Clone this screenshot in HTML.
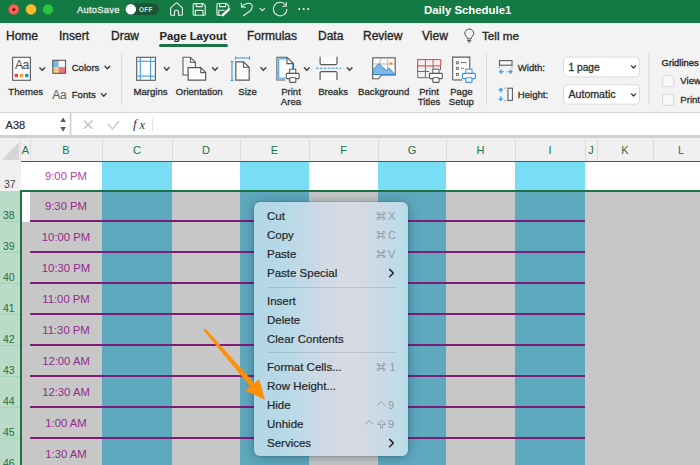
<!DOCTYPE html>
<html><head><meta charset="utf-8">
<style>
*{margin:0;padding:0;box-sizing:border-box}
html,body{width:700px;height:465px;overflow:hidden;background:#f3f3f3;font-family:"Liberation Sans",sans-serif;}
.a{position:absolute}
#title{left:0;top:0;width:700px;height:23px;background:#137a43}
.tl{position:absolute;top:4px;width:11px;height:11px;border-radius:50%}
#tabs{left:0;top:23px;width:700px;height:25px;background:#f3f3f3}
.tab{position:absolute;top:28.6px;font-size:12px;color:#262626;line-height:14px;-webkit-text-stroke:0.35px #262626}
.rl text{stroke:#2e2e2e;stroke-width:0.3px}
#ribbon{left:0;top:48px;width:700px;height:65px;background:#f3f3f3}
.lbl{position:absolute;font-size:10px;color:#262626;line-height:11px;text-align:center}
.sep{position:absolute;width:1px;background:#d8d8d8}
.chev{position:absolute;width:5px;height:5px;border-right:1.3px solid #444;border-bottom:1.3px solid #444;transform:rotate(45deg)}
#fbar{left:0;top:113px;width:700px;height:22px;background:#fff}
#colhdr{left:0;top:138px;width:700px;height:24px;background:#f0f0f0}
.ch{position:absolute;top:144px;font-size:11px;color:#217346;text-align:center;line-height:13px}
.cell{position:absolute}
.rh{position:absolute;left:0;width:20px;font-size:10.5px;text-align:left;padding-left:3px}
.tm{position:absolute;left:30px;width:72px;text-align:center;font-size:11.3px;line-height:13px}
.pl{position:absolute;left:30px;width:555px;height:1.9px;background:linear-gradient(to right,#7e1c78 0,#7e1c78 224px,transparent 224px,transparent 378px,#7e1c78 378px)}
#menu{left:254px;top:202px;width:154px;height:254px;border-radius:6px;overflow:hidden;
  background:linear-gradient(to right,rgb(178,215,230) 0px,rgb(183,217,232) 30px,rgb(198,217,230) 55px,rgb(212,218,228) 80px,rgb(215,218,227) 102px,rgb(204,218,229) 124px,rgb(190,219,232) 145px,rgb(186,218,232) 154px);
  box-shadow:0 0 0 0.5px rgba(0,40,60,0.2),0 1px 12px rgba(0,30,50,0.36)}
.mi{position:absolute;left:13px;font-size:11.5px;color:#262626;line-height:13px;-webkit-text-stroke:0.2px #262626}
.sc{position:absolute;font-size:11.5px;color:#8a9aa2;line-height:13px}
.msep{position:absolute;left:13px;width:129px;height:1px;background:rgba(0,0,0,0.11)}
</style></head><body>
<!-- Title bar -->
<div class="a" id="title"></div>
<svg class="a" style="left:0;top:0" width="320" height="23">
<circle cx="13.8" cy="9.4" r="5.2" fill="#fe5f57" stroke="#c94a43" stroke-width="0.4"/><circle cx="13.8" cy="9.4" r="1.5" fill="#7e0a0a"/>
<circle cx="31" cy="9.4" r="5.2" fill="#febc2e" stroke="#c99526" stroke-width="0.4"/>
<circle cx="48" cy="9.4" r="5.2" fill="#28c840" stroke="#1f9a33" stroke-width="0.4"/>
<rect x="125" y="3.2" width="34" height="11.8" rx="5.9" fill="#1d4f33" opacity="0.85"/>
<circle cx="130.8" cy="9.2" r="5.2" fill="#fff"/>
<g fill="none" stroke="#e9f1ec" stroke-width="1.1" stroke-linejoin="round" stroke-linecap="round">
<path d="M170.6 8.4 Q170.6 7.8 171.1 7.3 L176.5 2.7 L181.9 7.3 Q182.4 7.8 182.4 8.4 V14.6 Q182.4 15.2 181.8 15.2 H178.5 V11.4 Q178.5 10.2 177.3 10.2 H175.7 Q174.5 10.2 174.5 11.4 V15.2 H171.2 Q170.6 15.2 170.6 14.6 Z"/>
<path d="M194.2 3.6 H203.2 L205.2 5.6 V14.2 Q205.2 15.2 204.2 15.2 H194.2 Q193.2 15.2 193.2 14.2 V4.6 Q193.2 3.6 194.2 3.6 Z"/>
<path d="M196.2 3.6 V6.6 H202.2 V3.6"/>
<path d="M195.4 15.2 V10.4 H203 V15.2"/>
<path d="M221.5 15.3 H218 Q216.9 15.3 216.9 14.2 V4.6 Q216.9 3.5 218 3.5 H226.5 L228.7 5.7 V8.4"/>
<path d="M219.6 3.5 V6.6 H225.6 V3.5"/>
<path d="M218.8 15.3 V10.2 H224.2"/>
<path d="M241.6 6.9 Q244.8 3.2 248.8 3.2 Q252.4 3.4 252.2 7.2 Q252 9.4 249.6 11.2 L243.4 15.7"/>
<path d="M241.3 3.3 L241.6 6.9 L245.4 7.2"/>
<path d="M260 8.3 L262.3 10.6 L264.6 8.3"/>
<path d="M286.9 9.2 A6.8 6.8 0 1 1 285.4 4.8"/>
<path d="M286.4 2.6 L286.2 6.1 L282.6 6.3"/>
</g>
<path d="M222.8 15.2 L228.9 9.4" stroke="#fff" stroke-width="2.4" stroke-linecap="round"/>
<circle cx="299.2" cy="9.1" r="1" fill="#fff"/><circle cx="303.7" cy="9.1" r="1" fill="#fff"/><circle cx="308.2" cy="9.1" r="1" fill="#fff"/>
</svg>
<div class="a" style="left:77px;top:4px;font-size:9.4px;letter-spacing:0.25px;color:#e8f0ea;line-height:11px;-webkit-text-stroke:0.3px #e8f0ea">AutoSave</div>
<div class="a" style="left:139px;top:5.5px;font-size:6.4px;font-weight:bold;letter-spacing:0.3px;color:#d5e2d9;line-height:8px">OFF</div>
<div class="a" style="left:424px;top:3px;font-size:11.4px;font-weight:bold;color:#fff;line-height:14px">Daily Schedule1</div>

<!-- Tabs -->
<div class="a" id="tabs"></div>
<div class="tab" style="left:6px">Home</div>
<div class="tab" style="left:59px">Insert</div>
<div class="tab" style="left:111px">Draw</div>
<div class="tab" style="left:159.5px;font-weight:bold;font-size:11.3px;-webkit-text-stroke:0.1px #262626">Page Layout</div>
<div class="a" style="left:159px;top:44px;width:69px;height:3px;border-radius:2px;background:#1e7145"></div>
<div class="tab" style="left:247px">Formulas</div>
<div class="tab" style="left:318px">Data</div>
<div class="tab" style="left:363px">Review</div>
<div class="tab" style="left:422px">View</div>
<div class="tab" style="left:482px;font-size:11.7px">Tell me</div>
<svg class="a" style="left:460px;top:26px" width="20" height="20"><path d="M7.4 12.8 Q7.4 11.4 6.2 10.3 Q4.8 8.9 4.8 7.5 A4.45 4.45 0 0 1 13.7 7.5 Q13.7 8.9 12.3 10.3 Q11.1 11.4 11.1 12.8 Z" fill="none" stroke="#4a4a4a" stroke-width="1"/><path d="M7.5 14.4 H10.9 M8.2 15.9 H10.2" stroke="#4a4a4a" stroke-width="1" stroke-linecap="round"/></svg>

<!-- Ribbon -->
<div class="a" id="ribbon"></div>
<svg class="a" style="left:0;top:0" width="700" height="113">
<rect x="12.6" y="57.3" width="17.8" height="23" fill="#fbfbfb" stroke="#5a5a5a" stroke-width="1.1"/>
<text x="15" y="69.2" font-size="12.2" fill="#4a4a4a" font-family="Liberation Sans" letter-spacing="-0.6">Aa</text>
<rect x="14.6" y="73.9" width="3.4" height="3.3" fill="#e5453f"/><rect x="19.9" y="73.9" width="3.3" height="3.3" fill="#f0a033"/><rect x="25" y="73.9" width="3.5" height="3.3" fill="#2f8fd8"/>
<path d="M39.8 67.8 L42.199999999999996 70.39999999999999 L44.599999999999994 67.8" fill="none" stroke="#3c3c3c" stroke-width="1.4" stroke-linecap="round" stroke-linejoin="round"/>
<rect x="52.8" y="60.3" width="6" height="6.7" fill="#7cb6e6"/><rect x="58.8" y="60.3" width="6.7" height="6.7" fill="#fff"/><rect x="52.8" y="67" width="6" height="6.3" fill="#f3cb82"/><rect x="58.8" y="67" width="6.7" height="6.3" fill="#f07474"/>
<rect x="52.8" y="60.3" width="12.7" height="13" fill="none" stroke="#5a5a5a" stroke-width="1.1"/>
<path d="M105 66.2 L107.4 68.8 L109.8 66.2" fill="none" stroke="#3c3c3c" stroke-width="1.4" stroke-linecap="round" stroke-linejoin="round"/>
<text x="52.3" y="98.7" font-size="12" fill="#5c5c5c" font-family="Liberation Sans" letter-spacing="-0.3">Aa</text>
<path d="M101.3 93.6 L103.7 96.19999999999999 L106.1 93.6" fill="none" stroke="#3c3c3c" stroke-width="1.4" stroke-linecap="round" stroke-linejoin="round"/>
<rect x="121.2" y="53" width="1" height="52" fill="#d9d9d9"/>
<rect x="136.7" y="57.3" width="18.7" height="23" fill="#fbfbfb" stroke="#5a5a5a" stroke-width="1.1"/>
<path d="M140.3 57.8 V80 M150.6 57.8 V80 M137.2 61.3 H155 M137.2 76.1 H155" stroke="#3a96dd" stroke-width="1"/>
<path d="M164.3 67.6 L166.70000000000002 70.19999999999999 L169.10000000000002 67.6" fill="none" stroke="#3c3c3c" stroke-width="1.4" stroke-linecap="round" stroke-linejoin="round"/>
<path d="M183 57.3 H190.4 L195.4 62.3 V67.1 M188 75 H183 V57.3" fill="#fbfbfb" stroke="#5a5a5a" stroke-width="1.1"/>
<path d="M190.4 57.3 V62.3 H195.4" fill="none" stroke="#5a5a5a" stroke-width="1.1"/>
<path d="M188.1 67.6 H200.7 L205.7 72.6 V80.1 H188.1 Z" fill="#fbfbfb" stroke="#5a5a5a" stroke-width="1.2"/>
<path d="M200.7 67.6 V72.6 H205.7" fill="none" stroke="#5a5a5a" stroke-width="1.1"/>
<path d="M212.6 67.8 L215.0 70.39999999999999 L217.4 67.8" fill="none" stroke="#3c3c3c" stroke-width="1.4" stroke-linecap="round" stroke-linejoin="round"/>
<path d="M235.8 61.8 H243.5 L249.2 67.3 V80.1 H235.8 Z" fill="#fbfbfb" stroke="#5a5a5a" stroke-width="1.2"/>
<path d="M243.5 61.8 V67.3 H249.2" fill="none" stroke="#5a5a5a" stroke-width="1.1"/>
<path d="M235.5 58 H249.5 M235.5 56.6 V59.4 M249.5 56.6 V59.4 M232 61.5 V80.4 M230.6 61.5 H233.4 M230.6 80.4 H233.4" stroke="#3a96dd" stroke-width="1.1"/>
<path d="M261 67.8 L263.4 70.39999999999999 L265.8 67.8" fill="none" stroke="#3c3c3c" stroke-width="1.4" stroke-linecap="round" stroke-linejoin="round"/>
<path d="M285.3 80 H276.9 V57.3 H287 L293.5 63.6 V69" fill="#fbfbfb" stroke="#5a5a5a" stroke-width="1.1"/>
<path d="M287 57.3 V63.6 H293.5" fill="none" stroke="#5a5a5a" stroke-width="1.1"/>
<path d="M285.5 78.2 H278.7 V58.8 H286.5 M292.6 64 V69.2" fill="none" stroke="#3a96dd" stroke-width="1"/>
<rect x="289.6" y="69.2" width="6.2" height="4.2" fill="#fff" stroke="#5a5a5a" stroke-width="1"/><rect x="286.3" y="73.4" width="12.8" height="5.2" rx="0.8" fill="#fff" stroke="#5a5a5a" stroke-width="1.1"/><rect x="289.6" y="77.8" width="6.2" height="4.6" rx="0.6" fill="#fff" stroke="#5a5a5a" stroke-width="1.1"/>
<path d="M304.4 67.8 L306.79999999999995 70.39999999999999 L309.2 67.8" fill="none" stroke="#3c3c3c" stroke-width="1.4" stroke-linecap="round" stroke-linejoin="round"/>
<path d="M320.1 56.8 V63.2 Q320.1 64.7 321.6 64.7 H335.5 Q337 64.7 337 63.2 V56.8" fill="#fbfbfb" stroke="#5a5a5a" stroke-width="1.2"/>
<path d="M320.1 80 V73.1 Q320.1 71.6 321.6 71.6 H335.5 Q337 71.6 337 73.1 V80" fill="#fbfbfb" stroke="#5a5a5a" stroke-width="1.2"/>
<path d="M316 68.3 H341.2" stroke="#3a96dd" stroke-width="1.1" stroke-dasharray="2.6 1.3"/>
<path d="M347.2 67.8 L349.59999999999997 70.39999999999999 L352.0 67.8" fill="none" stroke="#3c3c3c" stroke-width="1.4" stroke-linecap="round" stroke-linejoin="round"/>
<rect x="372.7" y="57.8" width="22.5" height="17.2" fill="#fbfbfb" stroke="#5a5a5a" stroke-width="1.1"/>
<path d="M380.1 58.3 V74.5 M387.7 58.3 V74.5 M373.2 64 H394.7" stroke="#b5b5b5" stroke-width="1"/>
<path d="M373.2 69.4 L378.8 63.6 L386.4 70.6 L389 68 L394.9 74.5 H373.2 Z" fill="#7db8e6" stroke="#2f86d0" stroke-width="0.9" stroke-linejoin="round"/>
<circle cx="390.8" cy="63.4" r="1.4" fill="#f39a2b"/>
<path d="M372.7 75 V78.8 H378.6 L381.6 75" fill="#fbfbfb" stroke="#5a5a5a" stroke-width="1.1"/>
<path d="M417.7 77.7 V65.9 M417.7 71.5 H429 M425.4 65.9 V77.7 M417.7 77.7 H428.5 M433.1 65.9 V69 M440.5 65.9 V70" fill="none" stroke="#6a6a6a" stroke-width="1"/>
<rect x="417.7" y="59.6" width="23" height="6.3" fill="none" stroke="#e8474a" stroke-width="1.1"/><path d="M425.4 59.6 V65.9 M433.1 59.6 V65.9" stroke="#e8474a" stroke-width="1"/>
<rect x="432.8" y="69.2" width="6.2" height="4.2" fill="#fff" stroke="#5a5a5a" stroke-width="1"/><rect x="429.5" y="73.4" width="12.8" height="5.2" rx="0.8" fill="#fff" stroke="#5a5a5a" stroke-width="1.1"/><rect x="432.8" y="77.8" width="6.2" height="4.6" rx="0.6" fill="#fff" stroke="#5a5a5a" stroke-width="1.1"/>
<path d="M452.7 80 V57.1 H469.8 V69" fill="#fbfbfb" stroke="#5a5a5a" stroke-width="1.1"/><path d="M452.7 80 H462" fill="none" stroke="#5a5a5a" stroke-width="1.1"/>
<rect x="456.4" y="61.8" width="2" height="2" fill="none" stroke="#6a6a6a" stroke-width="0.9"/><rect x="456.4" y="67.5" width="2" height="2" fill="none" stroke="#6a6a6a" stroke-width="0.9"/><rect x="456.4" y="73.4" width="2" height="2" fill="none" stroke="#6a6a6a" stroke-width="0.9"/>
<path d="M461 62.6 H466.6 M461 68.3 H463.6" stroke="#6a6a6a" stroke-width="1"/>
<rect x="465.8" y="69.2" width="6.2" height="4.2" fill="#fbfbfb" stroke="#3a96dd" stroke-width="1"/><rect x="462.5" y="73.4" width="12.8" height="5.2" rx="0.8" fill="#fbfbfb" stroke="#3a96dd" stroke-width="1.1"/><rect x="465.8" y="77.8" width="6.2" height="4.6" rx="0.6" fill="#fbfbfb" stroke="#3a96dd" stroke-width="1.1"/>
<rect x="486" y="53" width="1" height="52" fill="#d9d9d9"/>
<rect x="499.5" y="60.6" width="12.5" height="4.6" fill="#fbfbfb" stroke="#5a5a5a" stroke-width="1.1"/>
<path d="M499.5 65.2 V68.4 M512 65.2 V68.4" stroke="#5a5a5a" stroke-width="0.9" stroke-dasharray="1 1"/>
<path d="M499.6 71.7 H503.6 M507.8 71.7 H512 M501.6 69.9 L499.6 71.7 L501.6 73.5 M510 69.9 L512 71.7 L510 73.5" fill="none" stroke="#3a96dd" stroke-width="1.1" stroke-linecap="round" stroke-linejoin="round"/>
<rect x="508" y="88.2" width="4.4" height="12.2" fill="#fbfbfb" stroke="#5a5a5a" stroke-width="1.1"/>
<path d="M504.4 88.2 H506.6 M504.4 100.4 H506.6" stroke="#5a5a5a" stroke-width="0.9" stroke-dasharray="1 1"/>
<path d="M500.8 88.3 V92.3 M500.8 96.5 V100.5 M499 90.3 L500.8 88.3 L502.6 90.3 M499 98.5 L500.8 100.5 L502.6 98.5" fill="none" stroke="#3a96dd" stroke-width="1.1" stroke-linecap="round" stroke-linejoin="round"/>
<rect x="563.5" y="57" width="76" height="19.8" rx="4" fill="#fff" stroke="#d4d4d4" stroke-width="0.8"/>
<rect x="563.5" y="84.8" width="76" height="19.4" rx="4" fill="#fff" stroke="#d4d4d4" stroke-width="0.8"/>
<path d="M631.4 65.8 L633.5 68 L635.6 65.8 M631.4 93.8 L633.5 96 L635.6 93.8" fill="none" stroke="#333" stroke-width="1.2" stroke-linecap="round" stroke-linejoin="round"/>
<rect x="648.4" y="53" width="1" height="52" fill="#d9d9d9"/>
<rect x="662.6" y="75.6" width="11.2" height="11.2" rx="2.5" fill="#f8f8f8" stroke="#cfcfcf" stroke-width="0.8"/>
<rect x="662.6" y="94.2" width="11.2" height="11.2" rx="2.5" fill="#f8f8f8" stroke="#cfcfcf" stroke-width="0.8"/>
<g class="rl">
<text x="25.7" y="94.7" font-size="9.6" text-anchor="middle" font-family="Liberation Sans" fill="#2e2e2e" >Themes</text>
<text x="150.5" y="94.7" font-size="9.6" text-anchor="middle" font-family="Liberation Sans" fill="#2e2e2e" >Margins</text>
<text x="199.2" y="94.7" font-size="9.6" text-anchor="middle" font-family="Liberation Sans" fill="#2e2e2e" >Orientation</text>
<text x="247.6" y="94.7" font-size="9.6" text-anchor="middle" font-family="Liberation Sans" fill="#2e2e2e" >Size</text>
<text x="291" y="94.7" font-size="9.6" text-anchor="middle" font-family="Liberation Sans" fill="#2e2e2e" >Print</text>
<text x="291" y="104.8" font-size="9.6" text-anchor="middle" font-family="Liberation Sans" fill="#2e2e2e" >Area</text>
<text x="333.1" y="94.7" font-size="9.6" text-anchor="middle" font-family="Liberation Sans" fill="#2e2e2e" >Breaks</text>
<text x="383.7" y="94.7" font-size="9.6" text-anchor="middle" font-family="Liberation Sans" fill="#2e2e2e" >Background</text>
<text x="429.1" y="94.7" font-size="9.6" text-anchor="middle" font-family="Liberation Sans" fill="#2e2e2e" >Print</text>
<text x="429.1" y="104.8" font-size="9.6" text-anchor="middle" font-family="Liberation Sans" fill="#2e2e2e" >Titles</text>
<text x="461.4" y="94.7" font-size="9.6" text-anchor="middle" font-family="Liberation Sans" fill="#2e2e2e" >Page</text>
<text x="461.4" y="104.8" font-size="9.6" text-anchor="middle" font-family="Liberation Sans" fill="#2e2e2e" >Setup</text>
<text x="71.7" y="70.6" font-size="9.6" text-anchor="start" font-family="Liberation Sans" fill="#2e2e2e" >Colors</text>
<text x="71.7" y="97.5" font-size="9.6" text-anchor="start" font-family="Liberation Sans" fill="#2e2e2e" >Fonts</text>
<text x="517.8" y="70.6" font-size="9.6" text-anchor="start" font-family="Liberation Sans" fill="#2e2e2e" >Width:</text>
<text x="517.8" y="98" font-size="9.6" text-anchor="start" font-family="Liberation Sans" fill="#2e2e2e" >Height:</text>
<text x="661.6" y="65.5" font-size="9.4" text-anchor="start" font-family="Liberation Sans" fill="#2e2e2e" style="stroke-width:0.4px">Gridlines</text>
<text x="680.3" y="84.2" font-size="9.6" text-anchor="start" font-family="Liberation Sans" fill="#2e2e2e" >View</text>
<text x="680.3" y="102.8" font-size="9.6" text-anchor="start" font-family="Liberation Sans" fill="#2e2e2e" >Print</text>
<text x="568.5" y="70.7" font-size="10.2" text-anchor="start" font-family="Liberation Sans" fill="#2e2e2e" >1 page</text>
<text x="568.5" y="98" font-size="10.6" text-anchor="start" font-family="Liberation Sans" fill="#2e2e2e" >Automatic</text>
</g>
</svg>
<div class="a" style="left:0;top:112px;width:700px;height:1px;background:#d6d6d6"></div>

<!-- Formula bar -->
<div class="a" id="fbar"></div>
<svg class="a" style="left:0;top:108px" width="700" height="32">
<text x="5.6" y="20.6" font-size="11" font-family="Liberation Sans" fill="#2a2a2a" stroke="#2a2a2a" stroke-width="0.2">A38</text>
<path d="M60.3 14.1 L63.1 9.4 L65.9 14.1 Z M60.3 19 L63.1 23.7 L65.9 19 Z" fill="#5a5a5a"/>
<rect x="69.8" y="5" width="1.6" height="22" fill="#cdcdcd"/>
<path d="M84 12.6 L92.2 20.8 M92.2 12.6 L84 20.8" stroke="#c4c4c4" stroke-width="1.5"/>
<path d="M108.1 16.2 L112.4 20.9 L119.3 13" fill="none" stroke="#c6c6c6" stroke-width="1.3"/>
<text x="133" y="20.4" font-size="13.5" font-style="italic" font-family="Liberation Serif" fill="#3a3a3a">f</text>
<text x="139.4" y="20.8" font-size="12.5" font-style="italic" font-family="Liberation Serif" fill="#3a3a3a">x</text>
<rect x="152" y="10.6" width="1" height="12.4" fill="#e2e2e2"/>
</svg>
<div class="a" style="left:0;top:135px;width:700px;height:3px;background:#d0d0d0"></div>

<!-- Column header -->
<div class="a" id="colhdr"></div>
<!-- corner -->
<div class="a" style="left:0;top:138px;width:21px;height:24px;background:#f0f0f0"></div>
<svg class="a" style="left:0;top:138px" width="21" height="24"><polygon points="19,4 19,22 2,22" fill="#d6d6d6"/></svg>
<div class="a" style="left:20px;top:138px;width:1px;height:24px;background:#dcdcdc"></div>
<div class="ch" style="left:21px;width:9px">A</div>
<div class="a" style="left:30px;top:139px;width:1px;height:22px;background:#dcdcdc"></div>
<div class="ch" style="left:30px;width:72px">B</div>
<div class="a" style="left:102px;top:139px;width:1px;height:22px;background:#dcdcdc"></div>
<div class="ch" style="left:102px;width:70px">C</div>
<div class="a" style="left:172px;top:139px;width:1px;height:22px;background:#dcdcdc"></div>
<div class="ch" style="left:172px;width:68px">D</div>
<div class="a" style="left:240px;top:139px;width:1px;height:22px;background:#dcdcdc"></div>
<div class="ch" style="left:240px;width:69px">E</div>
<div class="a" style="left:309px;top:139px;width:1px;height:22px;background:#dcdcdc"></div>
<div class="ch" style="left:309px;width:69px">F</div>
<div class="a" style="left:378px;top:139px;width:1px;height:22px;background:#dcdcdc"></div>
<div class="ch" style="left:378px;width:68px">G</div>
<div class="a" style="left:446px;top:139px;width:1px;height:22px;background:#dcdcdc"></div>
<div class="ch" style="left:446px;width:69px">H</div>
<div class="a" style="left:515px;top:139px;width:1px;height:22px;background:#dcdcdc"></div>
<div class="ch" style="left:515px;width:70px">I</div>
<div class="a" style="left:585px;top:139px;width:1px;height:22px;background:#dcdcdc"></div>
<div class="ch" style="left:585px;width:12px">J</div>
<div class="a" style="left:597px;top:139px;width:1px;height:22px;background:#dcdcdc"></div>
<div class="ch" style="left:597px;width:56px">K</div>
<div class="a" style="left:653px;top:139px;width:1px;height:22px;background:#dcdcdc"></div>
<div class="ch" style="left:653px;width:56px">L</div>
<div class="a" style="left:710px;top:139px;width:1px;height:22px;background:#dcdcdc"></div>
<div class="a" style="left:21px;top:161px;width:679px;height:1.5px;background:#1f7245"></div>
<!-- row 37 -->
<div class="a" style="left:0;top:162px;width:21px;height:29px;background:#f0f0f0"></div>
<div class="a" style="left:4px;top:178px;font-size:10.5px;color:#444;line-height:12px">37</div>
<div class="cell" style="left:21px;top:162px;width:9px;height:29px;background:#ffffff"></div>
<div class="cell" style="left:30px;top:162px;width:72px;height:29px;background:#ffffff"></div>
<div class="cell" style="left:102px;top:162px;width:70px;height:29px;background:#78ddf5"></div>
<div class="cell" style="left:172px;top:162px;width:68px;height:29px;background:#ffffff"></div>
<div class="cell" style="left:240px;top:162px;width:69px;height:29px;background:#78ddf5"></div>
<div class="cell" style="left:309px;top:162px;width:69px;height:29px;background:#ffffff"></div>
<div class="cell" style="left:378px;top:162px;width:68px;height:29px;background:#78ddf5"></div>
<div class="cell" style="left:446px;top:162px;width:69px;height:29px;background:#ffffff"></div>
<div class="cell" style="left:515px;top:162px;width:70px;height:29px;background:#78ddf5"></div>
<div class="cell" style="left:585px;top:162px;width:13px;height:29px;background:#ffffff"></div>
<div class="cell" style="left:598px;top:162px;width:56px;height:29px;background:#ffffff"></div>
<div class="cell" style="left:654px;top:162px;width:56px;height:29px;background:#ffffff"></div>
<div class="tm" style="top:169.5px;color:#bc3ca9">9:00 PM</div>
<!-- selected rows -->
<div class="cell" style="left:21px;top:191px;width:9px;height:274px;background:#c7c7c7"></div>
<div class="cell" style="left:30px;top:191px;width:72px;height:274px;background:#c7c7c7"></div>
<div class="cell" style="left:102px;top:191px;width:70px;height:274px;background:#5fa9bf"></div>
<div class="cell" style="left:172px;top:191px;width:68px;height:274px;background:#c7c7c7"></div>
<div class="cell" style="left:240px;top:191px;width:69px;height:274px;background:#5fa9bf"></div>
<div class="cell" style="left:309px;top:191px;width:69px;height:274px;background:#c7c7c7"></div>
<div class="cell" style="left:378px;top:191px;width:68px;height:274px;background:#5fa9bf"></div>
<div class="cell" style="left:446px;top:191px;width:69px;height:274px;background:#c7c7c7"></div>
<div class="cell" style="left:515px;top:191px;width:70px;height:274px;background:#5fa9bf"></div>
<div class="cell" style="left:585px;top:191px;width:13px;height:274px;background:#c7c7c7"></div>
<div class="cell" style="left:598px;top:191px;width:56px;height:274px;background:#c7c7c7"></div>
<div class="cell" style="left:654px;top:191px;width:56px;height:274px;background:#c7c7c7"></div>
<div class="cell" style="left:21px;top:191px;width:9px;height:31px;background:#fff"></div>
<div class="a" style="left:0;top:191px;width:20px;height:274px;background:#bbdbc9"></div>
<div class="a" style="left:0;top:221px;width:20px;height:1px;background:#a5d3b3"></div>
<div class="a" style="left:3px;top:209px;font-size:10.5px;color:#1f6f40;line-height:12px">38</div>
<div class="tm" style="top:200px;color:#932a8c">9:30 PM</div>
<div class="pl" style="top:220.4px"></div>
<div class="a" style="left:0;top:252px;width:20px;height:1px;background:#a5d3b3"></div>
<div class="a" style="left:3px;top:240px;font-size:10.5px;color:#1f6f40;line-height:12px">39</div>
<div class="tm" style="top:231px;color:#932a8c">10:00 PM</div>
<div class="pl" style="top:251.4px"></div>
<div class="a" style="left:0;top:283px;width:20px;height:1px;background:#a5d3b3"></div>
<div class="a" style="left:3px;top:271px;font-size:10.5px;color:#1f6f40;line-height:12px">40</div>
<div class="tm" style="top:262px;color:#932a8c">10:30 PM</div>
<div class="pl" style="top:282.4px"></div>
<div class="a" style="left:0;top:314px;width:20px;height:1px;background:#a5d3b3"></div>
<div class="a" style="left:3px;top:302px;font-size:10.5px;color:#1f6f40;line-height:12px">41</div>
<div class="tm" style="top:293px;color:#932a8c">11:00 PM</div>
<div class="pl" style="top:313.4px"></div>
<div class="a" style="left:0;top:345px;width:20px;height:1px;background:#a5d3b3"></div>
<div class="a" style="left:3px;top:333px;font-size:10.5px;color:#1f6f40;line-height:12px">42</div>
<div class="tm" style="top:324px;color:#932a8c">11:30 PM</div>
<div class="pl" style="top:344.4px"></div>
<div class="a" style="left:0;top:376px;width:20px;height:1px;background:#a5d3b3"></div>
<div class="a" style="left:3px;top:364px;font-size:10.5px;color:#1f6f40;line-height:12px">43</div>
<div class="tm" style="top:355px;color:#932a8c">12:00 AM</div>
<div class="pl" style="top:375.4px"></div>
<div class="a" style="left:0;top:407px;width:20px;height:1px;background:#a5d3b3"></div>
<div class="a" style="left:3px;top:395px;font-size:10.5px;color:#1f6f40;line-height:12px">44</div>
<div class="tm" style="top:386px;color:#932a8c">12:30 AM</div>
<div class="pl" style="top:406.4px"></div>
<div class="a" style="left:0;top:438px;width:20px;height:1px;background:#a5d3b3"></div>
<div class="a" style="left:3px;top:426px;font-size:10.5px;color:#1f6f40;line-height:12px">45</div>
<div class="tm" style="top:417px;color:#932a8c">1:00 AM</div>
<div class="pl" style="top:437.4px"></div>
<div class="a" style="left:0;top:469px;width:20px;height:1px;background:#a5d3b3"></div>
<div class="a" style="left:3px;top:457px;font-size:10.5px;color:#1f6f40;line-height:12px">46</div>
<div class="tm" style="top:448px;color:#932a8c">1:30 AM</div>
<div class="pl" style="top:468.4px"></div>
<div class="a" style="left:20px;top:190px;width:680px;height:2px;background:#1f7245"></div>
<div class="a" style="left:20px;top:190px;width:1.5px;height:275px;background:#1f7245"></div>

<!-- menu -->
<div class="a" id="menu">
<div class="mi" style="top:7.5px">Cut</div>

<div class="mi" style="top:26.5px">Copy</div>

<div class="mi" style="top:45.5px">Paste</div>

<div class="mi" style="top:64.5px">Paste Special</div>

<div class="mi" style="top:92.5px">Insert</div>
<div class="mi" style="top:111.5px">Delete</div>
<div class="mi" style="top:130.5px">Clear Contents</div>
<div class="mi" style="top:158.5px">Format Cells...</div>

<div class="mi" style="top:177.5px">Row Height...</div>
<div class="mi" style="top:196.5px">Hide</div>

<div class="mi" style="top:215.5px">Unhide</div>

<div class="mi" style="top:234.5px">Services</div>

<div class="msep" style="top:85px"></div>
<div class="msep" style="top:150px"></div>
<svg class="a" style="left:0;top:0" width="154" height="254">
<g font-family="Liberation Sans" font-size="11" fill="#8b9ba3">
<path d="M125.2 12.5 H128.8 V15.5 H125.2 Z M125.2 12.5 H124.2 A1.1 1.1 0 1 1 125.2 11.399999999999999 Z M128.8 12.5 V11.399999999999999 A1.1 1.1 0 1 1 129.9 12.5 Z M128.8 15.5 H129.9 A1.1 1.1 0 1 1 128.8 16.6 Z M125.2 15.5 V16.6 A1.1 1.1 0 1 1 124.2 15.5 Z" fill="none" stroke="#8b9ba3" stroke-width="0.9"/>
<text x="134" y="18" >X</text>
<path d="M125.2 31.5 H128.8 V34.5 H125.2 Z M125.2 31.5 H124.2 A1.1 1.1 0 1 1 125.2 30.4 Z M128.8 31.5 V30.4 A1.1 1.1 0 1 1 129.9 31.5 Z M128.8 34.5 H129.9 A1.1 1.1 0 1 1 128.8 35.6 Z M125.2 34.5 V35.6 A1.1 1.1 0 1 1 124.2 34.5 Z" fill="none" stroke="#8b9ba3" stroke-width="0.9"/>
<text x="134" y="37" >C</text>
<path d="M125.2 50.5 H128.8 V53.5 H125.2 Z M125.2 50.5 H124.2 A1.1 1.1 0 1 1 125.2 49.400000000000006 Z M128.8 50.5 V49.400000000000006 A1.1 1.1 0 1 1 129.9 50.5 Z M128.8 53.5 H129.9 A1.1 1.1 0 1 1 128.8 54.6 Z M125.2 53.5 V54.6 A1.1 1.1 0 1 1 124.2 53.5 Z" fill="none" stroke="#8b9ba3" stroke-width="0.9"/>
<text x="134" y="56" >V</text>
<path d="M125.2 163.5 H128.8 V166.5 H125.2 Z M125.2 163.5 H124.2 A1.1 1.1 0 1 1 125.2 162.39999999999998 Z M128.8 163.5 V162.39999999999998 A1.1 1.1 0 1 1 129.9 163.5 Z M128.8 166.5 H129.9 A1.1 1.1 0 1 1 128.8 167.6 Z M125.2 166.5 V167.6 A1.1 1.1 0 1 1 124.2 166.5 Z" fill="none" stroke="#8b9ba3" stroke-width="0.9"/>
<text x="135.5" y="169" >1</text>
<path d="M123.5 203.5 L127.3 199.4 L131.1 203.5" fill="none" stroke="#8b9ba3" stroke-width="1"/>
<text x="134" y="207">9</text>
<path d="M111.5 222.5 L115.3 218.4 L119.1 222.5" fill="none" stroke="#8b9ba3" stroke-width="1"/>
<text x="134" y="226">9</text>
<path d="M126.6 226 V222.4 H123.3 L127.6 218.2 L131.9 222.4 H128.6 V226 Z" fill="none" stroke="#8b9ba3" stroke-width="0.9" stroke-linejoin="round"/>
</g>
<path d="M135.6 67.4 L139.4 71.1 L135.6 74.8" fill="none" stroke="#2a2a2a" stroke-width="1.5" stroke-linecap="round" stroke-linejoin="round"/>
<path d="M135.6 237.4 L139.4 241.1 L135.6 244.8" fill="none" stroke="#2a2a2a" stroke-width="1.5" stroke-linecap="round" stroke-linejoin="round"/>
</svg>
</div>
<svg class="a" style="left:0;top:0" width="700" height="465"><polygon points="205.8,329.4 254.3,383.4 259,379.6 264.6,399.4 245.7,390.4 250.5,386.6 204.2,330.7" fill="#ff8e05" stroke="#ff8e05" stroke-width="0.6" stroke-linejoin="round"/><circle cx="205" cy="330" r="1.1" fill="#ff8e05"/></svg>
</body></html>
